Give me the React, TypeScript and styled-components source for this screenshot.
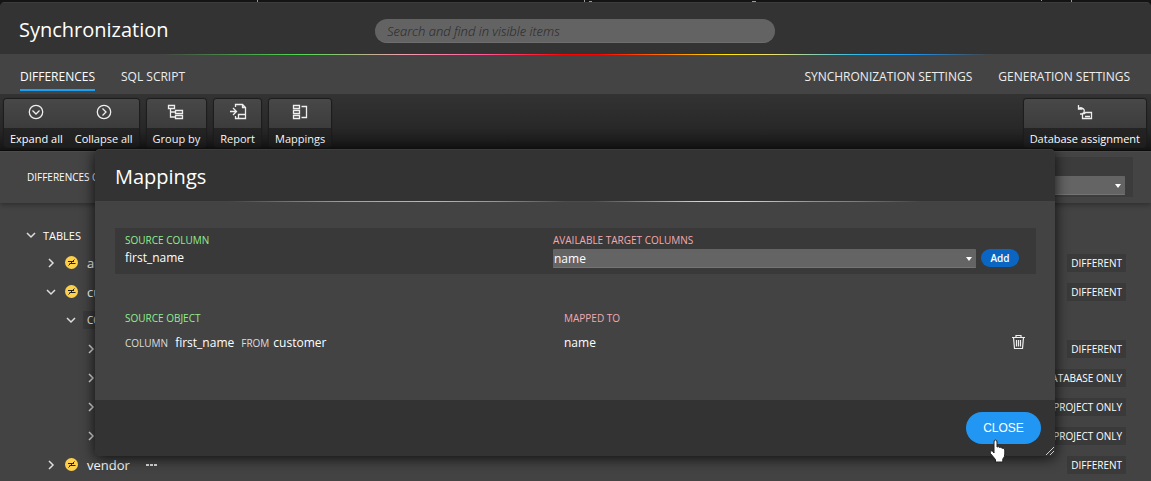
import React from "react";
import styled, { createGlobalStyle } from "styled-components";

const Global = createGlobalStyle`
  *, *::before, *::after { box-sizing: border-box; }
  body { margin: 0; background: #434343; }
  body, button, input, select, table { font-family: "Open Sans", "Noto Sans", sans-serif; font-size: 12px; color: #fff; }
  button, input, select { margin: 0; border: 0; padding: 0; background: none; }
  h1, h2, p, ul { margin: 0; padding: 0; font-weight: 400; }
  svg { display: block; }
`;

const Page = styled.div`
  position: relative;
  min-height: 100vh;
  overflow: hidden;
  background: #141414;
`;

const Window = styled.div`
  min-height: calc(100vh - 2px);
  border-radius: 5px 5px 0 0;
  background: #434343;
  overflow: hidden;
`;

const Rainbow = styled.div`
  height: 1px;
  background: linear-gradient(
    90deg,
    #444 14%,
    #4fd84f 26%,
    #f0a0b0 35%,
    #ff5a9a 42%,
    #f00 49%,
    #f00 52%,
    #ff7a00 58%,
    #ffe600 63%,
    #f0e070 67%,
    #20b8f0 75%,
    #2196f3 79%,
    #444 86%
  );
`;

const Header = styled.header`
  display: grid;
  grid-template-columns: 1fr 400px 1fr;
  align-items: center;
  height: 52px;
  padding: 3px 20px 0 19px;
  background: #333;
  border-top: 1px solid #3c3c3c;
`;

const Title = styled.h1`
  font-size: 20px;
  line-height: 28px;
`;

const Search = styled.input`
  height: 24px;
  padding: 2px 12px 0;
  border-radius: 12px;
  background: #636363;
  border-bottom: 1px solid #6e6e6e;
  font-size: 13px;
  font-style: italic;
  font-weight: 300;
  margin-top: 1px;
  &::placeholder { color: #262626; opacity: 1; }
`;

const Tabs = styled.nav`
  display: flex;
  gap: 26px;
  height: 39px;
  padding: 11px 21px 0 20px;
  background: #444;
`;

const Tab = styled.a<{ $active?: boolean }>`
  height: 25px;
  line-height: 21px;
  color: ${(p) => (p.$active ? "#fff" : "#eee")};
  text-decoration: none;
  border-bottom: 2px solid ${(p) => (p.$active ? "#1ba1f2" : "transparent")};
`;

const Spacer = styled.span`
  flex: 1;
`;

const Toolbar = styled.div`
  display: flex;
  align-items: flex-start;
  gap: 8px;
  height: 57px;
  padding: 5px 5px 0 4px;
  background: linear-gradient(#333, #282828 60%, #151515);
  border-bottom: 1px solid #0c0c0c;
`;

const Group = styled.div`
  display: flex;
  height: 48px;
  border-radius: 3px;
  overflow: hidden;
  background: linear-gradient(#484848, #3c3c3c 29px, #242424 29px, #1e1e1e);
  box-shadow: 0 0 1px 1px #1c1c1c;
`;

const Tool = styled.button`
  display: flex;
  flex-direction: column;
  align-items: center;
  gap: 9px;
  padding: 3px 6px 0;
  font-size: 11px;
  line-height: 16px;
  white-space: nowrap;
`;

const FilterBar = styled.div`
  display: flex;
  align-items: center;
  justify-content: space-between;
  height: 52px;
  padding: 0 18px 2px 27px;
  border-top: 1px solid #4c4c4c;
  background: #444;
  box-shadow: 0 2px 5px rgba(0, 0, 0, 0.3);
  font-size: 10px;
`;

const FilterBox = styled.div`
  display: flex;
  align-items: flex-end;
  width: 420px;
  height: 40px;
  padding: 0 8px 2px;
  background: #3c3c3c;
`;

const SelectWrap = styled.div`
  position: relative;
  display: flex;
  flex: 1;
  &::after {
    content: "";
    position: absolute;
    right: 4px;
    top: 8px;
    border: 3px solid transparent;
    border-top: 4px solid #fff;
    border-bottom: 0;
    pointer-events: none;
  }
`;

const Select = styled.select`
  appearance: none;
  flex: 1;
  width: 100%;
  height: 19px;
  padding: 2px 1px 0;
  border-radius: 1px;
  background: #646464;
  border-bottom: 1px solid #747474;
  line-height: 16px;
`;

const Tree = styled.ul`
  list-style: none;
  padding: 19px 25px 0;
`;

const rowHeights = [26, 29, 28, 29];

const Row = styled.li<{ $level: number }>`
  display: flex;
  align-items: center;
  height: ${(p) => rowHeights[p.$level]}px;
  padding-left: ${(p) => p.$level * 20}px;
`;

const Toggle = styled.button`
  display: flex;
  justify-content: center;
  width: 12px;
  margin-right: 6px;
`;

const Heading = styled.span`
  font-size: 11px;
`;

const Item = styled.span`
  display: flex;
  align-items: center;
  gap: 9px;
  padding-left: 2px;
  font-size: 13px;
`;

const More = styled.button`
  margin-left: 16px;
`;

const Chip = styled.span`
  padding: 0 4px;
  background: #3a3a3a;
  font-size: 10px;
  line-height: 18px;
`;

const Overlay = styled.div`
  position: absolute;
  inset: 0;
  display: flex;
  justify-content: center;
  align-items: flex-start;
  padding: 149px 96px 0 95px;
`;

const Dialog = styled.section`
  position: relative;
  width: 100%;
  max-width: 960px;
  border-radius: 5px;
  background: #434343;
  box-shadow: 0 2px 14px rgba(0, 0, 0, 0.8);
`;

const DialogHeader = styled.header`
  height: 52px;
  padding: 13px 20px 0;
  border-radius: 5px 5px 0 0;
  border-top: 1px solid #3c3c3c;
  background: #333;
`;

const DialogBody = styled.div`
  height: 198px;
  padding: 26px 19px 0 20px;
`;

const Panel = styled.form`
  display: grid;
  grid-template-columns: 428px minmax(0, 1fr) 38px;
  height: 46px;
  padding: 4px 17px 0 10px;
  background: #393939;
`;

const Label = styled.label<{ $tone: "green" | "pink" }>`
  display: block;
  font-size: 10px;
  line-height: 17px;
  color: ${(p) => (p.$tone === "green" ? "#90ee90" : "#f4a9b0")};
`;

const Value = styled.output`
  display: block;
  line-height: 18px;
`;

const Field = styled.div`
  padding-right: 5px;
`;

const Add = styled.button`
  align-self: start;
  height: 18px;
  margin-top: 17px;
  border-radius: 9px;
  background: #0a66c2;
  font-size: 10px;
  font-weight: 600;
`;

const MapTable = styled.table`
  width: 100%;
  margin-top: 32px;
  border-collapse: collapse;
  table-layout: fixed;
  th, td { padding: 0; text-align: left; height: 24px; font-weight: 400; }
  th:first-child, td:first-child { width: 449px; padding-left: 10px; }
  th:last-child, td:last-child { width: 25px; }
`;

const Small = styled.small`
  font-size: 10px;
  color: #ddd;
`;

const TableName = styled.span<{ $gap?: boolean }>`
  margin: ${(p) => (p.$gap ? "0 7px" : "0 0 0 4px")};
`;

const Delete = styled.button`
  display: block;
`;

const DialogFooter = styled.footer`
  display: flex;
  justify-content: flex-end;
  align-items: center;
  height: 56px;
  padding: 0 14px;
  border-radius: 0 0 5px 5px;
  background: #333;
`;

const Close = styled.button`
  width: 75px;
  height: 32px;
  border-radius: 16px;
  background: #2196f3;
  font-family: "Liberation Sans", Arial, sans-serif;
`;

const Grip = styled.svg`
  position: absolute;
  right: 1px;
  bottom: 1px;
`;

const Pointer = styled.svg`
  position: absolute;
  right: 49px;
  bottom: -7px;
`;

const Icon = ({ children }: { children: React.ReactNode }) => (
  <svg width="20" height="20" viewBox="0 0 20 20" fill="none" stroke="#eee" strokeWidth="1.3">
    {children}
  </svg>
);

const Chevron = ({ open }: { open?: boolean }) => (
  <Toggle aria-label={open ? "Collapse" : "Expand"}>
    <svg width="10" height="10" viewBox="0 0 10 10" fill="none" stroke="#ddd" strokeWidth="1.5">
      <path d={open ? "M1 3l4 4 4-4" : "M3 1l4 4-4 4"} />
    </svg>
  </Toggle>
);

const NotEqual = () => (
  <svg width="13" height="13" viewBox="0 0 13 13">
    <circle cx="6.5" cy="6.5" r="6.5" fill="#fdd04b" />
    <path d="M3 5.500h6M4.500 7.500h6M3.500 9.500l6-6" stroke="#222" fill="none" />
  </svg>
);

const rows: { level: number; open?: boolean; name?: string; chip?: string; status?: string; more?: boolean }[] = [
  { level: 1, name: "area", status: "DIFFERENT" },
  { level: 1, open: true, name: "customer", status: "DIFFERENT" },
  { level: 2, open: true, chip: "COLUMNS" },
  { level: 3, status: "DIFFERENT" },
  { level: 3, status: "DATABASE ONLY" },
  { level: 3, status: "PROJECT ONLY" },
  { level: 3, status: "PROJECT ONLY" },
  { level: 1, name: "vendor", status: "DIFFERENT", more: true },
];

export default function App() {
  return (
    <Page>
      <Global />
      <svg width="1151" height="2" viewBox="0 0 1151 2" fill="#999" aria-hidden="true">
        <path d="M257 0h1v2h-1zM584 0h1v2h-1zM589 1h3v1h-3zM752 1h4v1h-4zM1041 0h1v1h-1zM1071 0h1v2h-1z" />
      </svg>
      <Window>
        <Header>
          <Title>Synchronization</Title>
          <Search aria-label="Search" placeholder="Search and find in visible items" />
        </Header>
        <Rainbow />
        <Tabs>
          <Tab href="#differences" $active>DIFFERENCES</Tab>
          <Tab href="#sql">SQL SCRIPT</Tab>
          <Spacer />
          <Tab href="#sync">SYNCHRONIZATION SETTINGS</Tab>
          <Tab href="#generation">GENERATION SETTINGS</Tab>
        </Tabs>
        <Toolbar>
          <Group>
            <Tool>
              <Icon><circle cx="10" cy="10" r="6.700" /><path d="M6.500 8.500L10 12l3.500-3.500" /></Icon>
              Expand all
            </Tool>
            <Tool>
              <Icon><circle cx="10" cy="10" r="6.700" /><path d="M8.500 6.500L12 10l-3.500 3.500" /></Icon>
              Collapse all
            </Tool>
          </Group>
          <Group>
            <Tool>
              <Icon><path d="M2.500 3.500h6v3h-6zM9.500 8.500h7v3h-7zM9.500 13.500h7v3h-7zM4.500 6.500v8.500h5M4.500 10h5" /></Icon>
              Group by
            </Tool>
          </Group>
          <Group>
            <Tool>
              <Icon><path d="M7.500 5V2.500h7l3 3v11h-10V14M14.500 2.500v3h3M2 9.500h6M5 6l3.500 3.500L5 13M10.500 12.500h7v4h-7z" /></Icon>
              Report
            </Tool>
          </Group>
          <Group>
            <Tool>
              <Icon><path d="M3.500 3.500h6v3h-6zM3.500 8.500h6v3h-6zM3.500 13.500h6v3h-6zM11.500 4.500h5v11h-5" /></Icon>
              Mappings
            </Tool>
          </Group>
          <Spacer />
          <Group>
            <Tool>
              <Icon><path d="M3.500 3v4h4M4 6.500a3.200 3.200 0 1 1 3 5.500h-2M7.500 11.500h2l1-1h6v6h-9zM10 14.500h5" /></Icon>
              Database assignment
            </Tool>
          </Group>
        </Toolbar>
        <FilterBar>
          DIFFERENCES OF
          <FilterBox>
            <SelectWrap><Select aria-label="Show" /></SelectWrap>
          </FilterBox>
        </FilterBar>
        <Tree>
          <Row $level={0}><Chevron open /><Heading>TABLES</Heading></Row>
          {rows.map((r, i) => (
            <Row key={i} $level={r.level}>
              <Chevron open={r.open} />
              {r.name && <Item><NotEqual />{r.name}</Item>}
              {r.chip && <Chip>{r.chip}</Chip>}
              {r.more && (
                <More aria-label="More">
                  <svg width="12" height="2" viewBox="0 0 12 2" fill="#ddd"><path d="M0 0h3v2H0zM4 0h3v2H4zM8 0h3v2H8z" /></svg>
                </More>
              )}
              <Spacer />
              {r.status && <Chip>{r.status}</Chip>}
            </Row>
          ))}
        </Tree>
      </Window>
      <Overlay>
        <Dialog role="dialog" aria-labelledby="mappings-title">
          <DialogHeader><Title as="h2" id="mappings-title">Mappings</Title></DialogHeader>
          <Rainbow />
          <DialogBody>
            <Panel>
              <div>
                <Label $tone="green" htmlFor="source">SOURCE COLUMN</Label>
                <Value id="source">first_name</Value>
              </div>
              <Field>
                <Label $tone="pink" htmlFor="target">AVAILABLE TARGET COLUMNS</Label>
                <SelectWrap><Select id="target"><option>name</option></Select></SelectWrap>
              </Field>
              <Add type="button">Add</Add>
            </Panel>
            <MapTable>
              <thead>
                <tr>
                  <th><Label as="span" $tone="green">SOURCE OBJECT</Label></th>
                  <th><Label as="span" $tone="pink">MAPPED TO</Label></th>
                  <th />
                </tr>
              </thead>
              <tbody>
                <tr>
                  <td><Small>COLUMN</Small><TableName $gap>first_name</TableName><Small>FROM</Small><TableName>customer</TableName></td>
                  <td>name</td>
                  <td>
                    <Delete aria-label="Delete mapping">
                      <svg width="15" height="16" viewBox="0 0 15 16" fill="none" stroke="#eee" strokeWidth="1.200">
                        <path d="M1 3.500h13M5 3.500V1.500h5v2M2.500 3.500l1 11h8l1-11M5.500 6v6.500M7.500 6v6.500M9.500 6v6.500" />
                      </svg>
                    </Delete>
                  </td>
                </tr>
              </tbody>
            </MapTable>
          </DialogBody>
          <DialogFooter><Close>CLOSE</Close></DialogFooter>
          <Grip width="8" height="8" viewBox="0 0 8 8" stroke="#ccc" fill="none"><path d="M0 8l8-8M4 8l4-4" /></Grip>
          <Pointer width="17" height="24" viewBox="0 0 17 24">
            <path d="M5 12V3q0-2 1.500-2T8 3v5q1.500-1 2.500.500 1.500-1 2.500.700 2.500-.700 2.800 1.800v4q0 3-2 5v3H6.500v-2.500L1.500 14.500q-1-2 .500-2.700T5 14z" fill="#fff" stroke="#222" />
          </Pointer>
        </Dialog>
      </Overlay>
    </Page>
  );
}
